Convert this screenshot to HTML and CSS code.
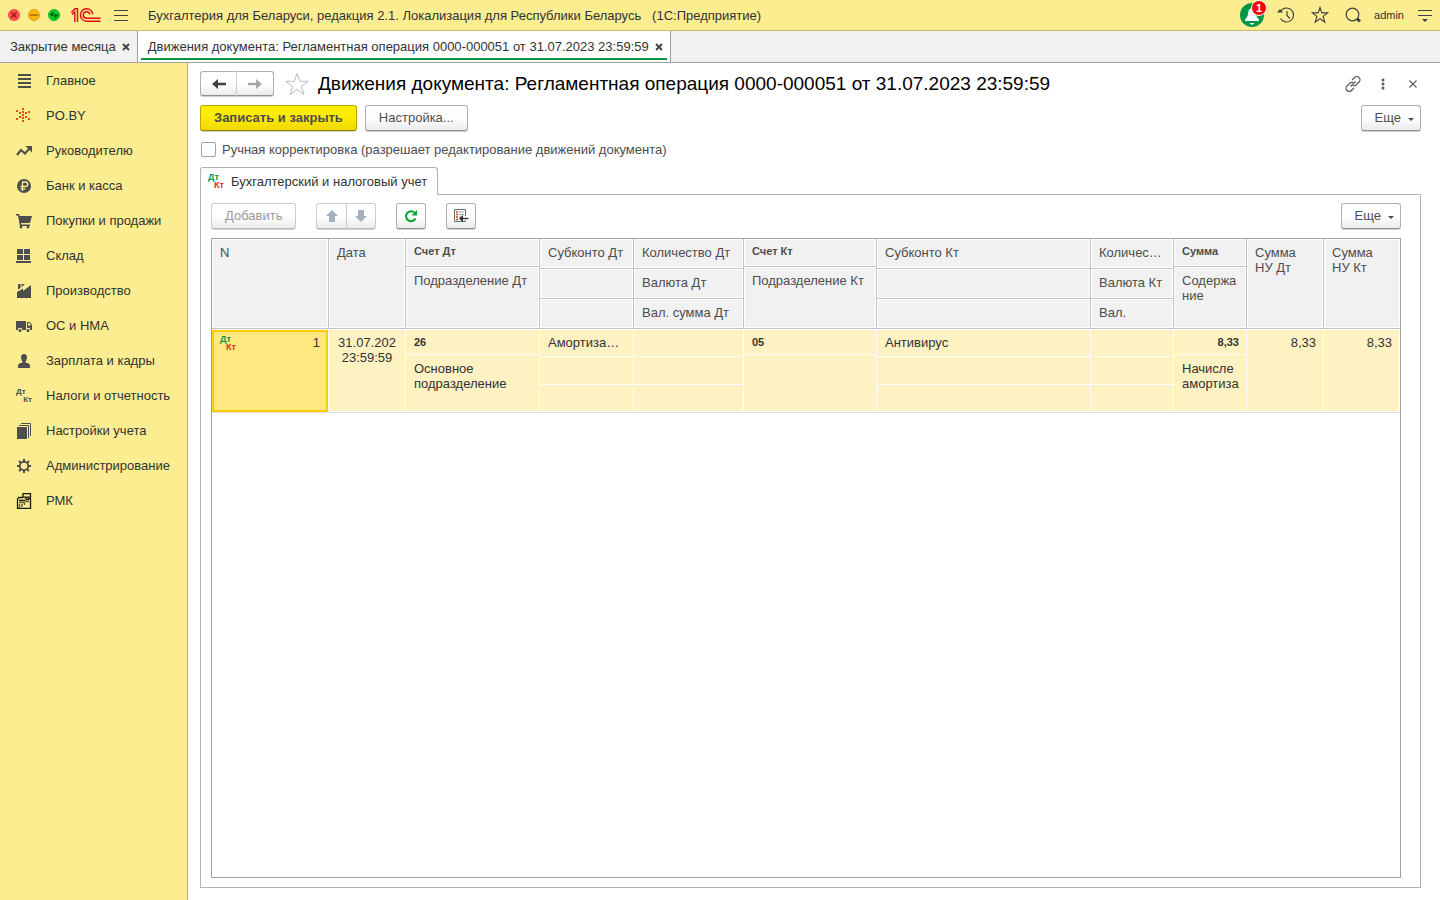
FILE: index.html
```html
<!DOCTYPE html>
<html lang="ru">
<head>
    <meta charset="UTF-8">
    <meta name="viewport" content="width=device-width, initial-scale=1.0">
    <title>Бухгалтерия для Беларуси</title>
    <link rel="stylesheet" href="styles.css">
</head>
<body>
    <header class="topbar">
        <div class="window-buttons">
            <button class="dot" aria-label="Закрыть окно"><svg width="12" height="12"><circle cx="6" cy="6" r="6" fill="#fc4f4b"/><path d="M3.5 3.5l5 5m0-5l-5 5" stroke="#96110f" stroke-width="1.3"/></svg></button>
            <button class="dot" aria-label="Свернуть"><svg width="12" height="12"><circle cx="6" cy="6" r="5.5" fill="#ffb70b" stroke="#e39b0e"/><path d="M2 6h8" stroke="#9a6300" stroke-width="1.4"/></svg></button>
            <button class="dot" aria-label="Развернуть"><svg width="12" height="12"><circle cx="6" cy="6" r="5.5" fill="#0ccc27" stroke="#12b32a"/><path d="M5.500 2v5.500L1.500 6zM6.500 10V4.500L10.500 6z" fill="#045c10"/></svg></button>
        </div>
        <svg class="logo" width="30" height="15" viewBox="0 0 30 15" fill="none" stroke="#e30613" stroke-width="1.400"><path d="M.500 4.500L4 .800H6.500V14M1 6.500L3.800 4V14"/><path d="M21.800 6.500A6.200 6.200 0 1 0 15.500 13.200H29.500"/><path d="M18.800 6.500A3.300 3.300 0 1 0 15.500 10.300H29.500"/></svg>
        <button class="bare" aria-label="Меню"><svg width="16" height="14" stroke="#404040"><path d="M1 2.500h14M1 7.500h14M1 12.500h14"/></svg></button>
        <span class="app-title">Бухгалтерия для Беларуси, редакция 2.1. Локализация для Республики Беларусь &nbsp; (1С:Предприятие)</span>
        <div class="top-tools">
            <button class="bare bell" aria-label="Оповещения">
                <svg width="24" height="24"><circle cx="12" cy="12" r="12" fill="#009646"/><path d="M12 5c-3 .5-3.500 3-4 6-.4 2.500-1.500 4-3 5.500V18h14v-1.500c-1.500-1.500-2.600-3-3-5.500-.5-3-1-5.500-4-6z" fill="#fff"/><path d="M9.500 20h5l-2.500 2z" fill="#fff"/></svg>
                <span class="badge">1</span>
            </button>
            <button class="bare" aria-label="История"><svg width="18" height="16" fill="none" stroke="#404040" stroke-width="1.200"><path d="M3.500 4.500A7 7 0 1 1 3.500 11.500"/><path d="M10 4v4.500l3 3"/><path d="M0 5.500h6L3 2z" fill="#404040" stroke="none"/></svg></button>
            <button class="bare" aria-label="Избранное"><svg width="18" height="18" fill="none" stroke="#404040" stroke-width="1.100"><path d="M9 1.500l1.900 5.400h5.800l-4.600 3.500 1.700 5.700L9 12.700l-4.800 3.400 1.700-5.700L1.300 6.900h5.800z"/></svg></button>
            <button class="bare" aria-label="Поиск"><svg width="16" height="16" fill="none" stroke="#404040"><circle cx="7.500" cy="7.500" r="6.300" stroke-width="1.200"/><path d="M12 11.500l3 3" stroke-width="3"/></svg></button>
            <a href="#" class="user">admin</a>
            <button class="bare" aria-label="Настройки"><svg width="14" height="14"><path d="M0 2.500h14M0 7.500h14" stroke="#404040"/><path d="M4 11h6l-3 3z" fill="#404040"/></svg></button>
        </div>
    </header>

    <nav class="tabs">
        <div class="tab"><a href="#">Закрытие месяца</a><button class="bare" aria-label="Закрыть вкладку"><svg width="8" height="8" stroke="#404040" stroke-width="1.800"><path d="M1 1l6 6m0-6L1 7"/></svg></button></div>
        <div class="tab active"><a href="#">Движения документа: Регламентная операция 0000-000051 от 31.07.2023 23:59:59</a><button class="bare" aria-label="Закрыть вкладку"><svg width="8" height="8" stroke="#404040" stroke-width="1.800"><path d="M1 1l6 6m0-6L1 7"/></svg></button></div>
    </nav>

    <div class="workspace">
        <nav class="sidebar">
            <a href="#"><svg viewBox="0 0 16 16"><path d="M2 1h13v2H2zM2 5h13v2H2zM2 9h13v2H2zM2 13h13v2H2z"/></svg>Главное</a>
            <a href="#"><svg viewBox="0 0 16 16" fill="#e8500a"><path d="M6 0h2v2H6zM6 3h2v2H6zM6 6h2v2H6zM6 9h2v2H6zM6 12h2v2H6zM0 2h2v2H0zM3 4h2v2H3zM3 8h2v2H3zM0 10h2v2H0zM9 4h2v2H9zM12 3h2v2h-2zM9 8h2v2H9zM12 10h2v2h-2z"/></svg>PO.BY</a>
            <a href="#"><svg viewBox="0 0 16 16"><path d="M1 12l4-5 4 3.500 4-4.500" fill="none" stroke="#4d4d4d" stroke-width="2.200"/><path d="M9.500 3H16v6.500z"/></svg>Руководителю</a>
            <a href="#"><svg viewBox="0 0 16 16"><circle cx="8" cy="8" r="7"/><path d="M6.500 13V4h3a2.200 2.200 0 0 1 0 4.500H4.500M4.500 10.800h5" fill="none" stroke="#fbed90" stroke-width="1.300"/></svg>Банк и касса</a>
            <a href="#"><svg viewBox="0 0 16 16"><path d="M0 1h3l.7 2H16l-2 7H5l.3 1.500H14V13H4L2 2.500H0z"/><circle cx="5" cy="14" r="1.400"/><circle cx="12" cy="14" r="1.400"/></svg>Покупки и продажи</a>
            <a href="#"><svg viewBox="0 0 16 16"><path d="M1 1h6v5H1zM8 1h6v5H8zM1 7h6v5H1zM8 7h6v5H8zM0 13h15v2H0z"/></svg>Склад</a>
            <a href="#"><svg viewBox="0 0 16 16"><path d="M1 15V9l6-3.500V8l8-6v13zM2 1h2.500v4L2 6.500zM5.500 1H9L5.500 4z"/></svg>Производство</a>
            <a href="#"><svg viewBox="0 0 16 16"><path d="M0 3h10v9H0zM11 4h3l2 3v5h-5z"/><path d="M12 5h1.500L15 7.500h-3z" fill="#fbed90"/><circle cx="4" cy="12" r="2.300" fill="#fbed90"/><circle cx="12" cy="12" r="2.300" fill="#fbed90"/><circle cx="4" cy="12.500" r="1.500"/><circle cx="12" cy="12.500" r="1.500"/></svg>ОС и НМА</a>
            <a href="#"><svg viewBox="0 0 16 16"><path d="M8 1c2 0 3 1.300 3 3.200C11 6 10 8 9.500 8.500v1C12 10 14 10.500 14 13v2H2v-2c0-2.500 2-3 4.500-3.500v-1C6 8 5 6 5 4.200 5 2.300 6 1 8 1z"/></svg>Зарплата и кадры</a>
            <a href="#"><span class="dtkt mono"><b>Дт</b><b>Кт</b></span>Налоги и отчетность</a>
            <a href="#"><svg viewBox="0 0 16 16"><path d="M1 4h10v12H1z"/><path d="M3 2.500h9.500V15M5 .500h9.500V13" fill="none" stroke="#4d4d4d"/></svg>Настройки учета</a>
            <a href="#"><svg viewBox="0 0 16 16"><circle cx="8" cy="8" r="4.200" fill="none" stroke="#4d4d4d" stroke-width="1.800"/><path d="M8 1v3M8 12v3M1 8h3M12 8h3M3 3l2 2M11 11l2 2M13 3l-2 2M5 11l-2 2" stroke="#4d4d4d" stroke-width="2"/></svg>Администрирование</a>
            <a href="#"><svg viewBox="0 0 16 16" fill="none" stroke="#1a1a0a"><path d="M7 4.500H3l-1.500 1.500v9.500h13V5.500H12" stroke-width="1.300"/><path d="M7 .700h7.500v3.500H7zM10 4v2.500h3M3 7.500h6" stroke-width="1.300"/><path d="M3 9.500h6M3.500 11v4M6 11v3M8.500 10v2M9 8.500h4" stroke="#6d6530" stroke-width="1.500"/></svg>РМК</a>
        </nav>

        <main class="document">
            <div class="title-row">
                <div class="btn-group nav-group">
                    <button class="btn" aria-label="Назад"><svg width="14" height="12"><path d="M0 6l6-5v3.700h8v2.600H6V11z" fill="#404040"/></svg></button>
                    <button class="btn" aria-label="Вперед"><svg width="14" height="12"><path d="M14 6L8 1v3.700H0v2.600h8V11z" fill="#a6a6a6"/></svg></button>
                </div>
                <button class="bare star" aria-label="В избранное"><svg width="24" height="24" fill="none" stroke="#b3bcc7"><path d="M12 1.500l2.700 7.800h8.500l-6.800 5 2.600 8.200-7-5-7 5 2.600-8.200-6.800-5h8.500z"/></svg></button>
                <h1>Движения документа: Регламентная операция 0000-000051 от 31.07.2023 23:59:59</h1>
                <div class="title-tools">
                    <button class="bare" aria-label="Ссылка"><svg width="16" height="16" fill="none" stroke="#595959" stroke-width="1.200"><path d="M7 4l2.500-2.500a3 3 0 0 1 4.500 0 3 3 0 0 1 0 4.500L11 9a3 3 0 0 1-3 .5M9 12l-2.500 2.500a3 3 0 0 1-4.500 0 3 3 0 0 1 0-4.500L5 7a3 3 0 0 1 3-.5M5.500 10.500l5-5"/></svg></button>
                    <button class="bare" aria-label="Еще действия"><svg width="4" height="12" fill="#595959"><circle cx="2" cy="2" r="1.500"/><circle cx="2" cy="6" r="1.500"/><circle cx="2" cy="10" r="1.500"/></svg></button>
                    <button class="bare" aria-label="Закрыть"><svg width="8" height="8" stroke="#595959" stroke-width="1.100"><path d="M.500.500l7 7m0-7l-7 7"/></svg></button>
                </div>
            </div>

            <div class="command-row">
                <button class="btn primary">Записать и закрыть</button>
                <button class="btn">Настройка...</button>
                <button class="btn more">Еще<i class="caret"></i></button>
            </div>

            <div class="check-row">
                <input type="checkbox" id="manual">
                <label for="manual">Ручная корректировка (разрешает редактирование движений документа)</label>
            </div>

            <div class="page-tabs">
                <button class="page-tab"><span class="dtkt"><b>Дт</b><b>Кт</b></span>Бухгалтерский и налоговый учет</button>
            </div>

            <section class="panel">
                <div class="toolbar">
                    <button class="btn muted">Добавить</button>
                    <div class="btn-group muted">
                        <button class="btn" aria-label="Вверх"><svg width="12" height="12"><path d="M6 0l6 6H9v6H3V6H0z" fill="#a5b0bb"/></svg></button>
                        <button class="btn" aria-label="Вниз"><svg width="12" height="12"><path d="M6 12l6-6H9V0H3v6H0z" fill="#a5b0bb"/></svg></button>
                    </div>
                    <button class="btn square" aria-label="Обновить"><svg width="14" height="14"><path d="M11.500 9.500A5 5 0 1 1 10.500 3.500" fill="none" stroke="#00a329" stroke-width="2"/><path d="M13 1v5.500H7.500z" fill="#00a329"/></svg></button>
                    <button class="btn square" aria-label="Показать движения"><svg width="16" height="16" fill="none"><path d="M12.500 8V1.500H1.500v12H12.500V12" stroke="#5c7080"/><path d="M3 4h2M3 6.500h2M3 9h2M3 11.500h2" stroke="#d9431e" stroke-width="1.300"/><path d="M6 4h5M6 6.500h5M6 9h2" stroke="#98a4ae"/><path d="M15.500 10.500H9" stroke="#303030" stroke-width="1.300"/><path d="M10 7v7l-4-3.500z" fill="#303030"/></svg></button>
                    <button class="btn more">Еще<i class="caret"></i></button>
                </div>

                <div class="grid-box">
                    <table class="grid">
                        <colgroup>
                            <col class="c-n"><col class="c-date"><col class="c-acc"><col class="c-sub"><col class="c-qty"><col class="c-acc-kt"><col><col class="c-qty-kt"><col class="c-sum"><col class="c-nu"><col class="c-nu-kt">
                        </colgroup>
                        <thead>
                            <tr>
                                <th><div class="stack"><div>N</div></div></th>
                                <th><div class="stack"><div>Дата</div></div></th>
                                <th><div class="stack two"><div>Счет Дт</div><div>Подразделение Дт</div></div></th>
                                <th><div class="stack three"><div>Субконто Дт</div><div></div><div></div></div></th>
                                <th><div class="stack three"><div>Количество Дт</div><div>Валюта Дт</div><div>Вал. сумма Дт</div></div></th>
                                <th><div class="stack two"><div>Счет Кт</div><div>Подразделение Кт</div></div></th>
                                <th><div class="stack three"><div>Субконто Кт</div><div></div><div></div></div></th>
                                <th><div class="stack three"><div>Количес…</div><div>Валюта Кт</div><div>Вал.</div></div></th>
                                <th><div class="stack two"><div>Сумма</div><div>Содержа<br>ние</div></div></th>
                                <th><div class="stack"><div>Сумма<br>НУ Дт</div></div></th>
                                <th><div class="stack"><div>Сумма<br>НУ Кт</div></div></th>
                            </tr>
                        </thead>
                        <tbody>
                            <tr>
                                <td class="selected"><div class="stack"><div class="num-cell"><span class="dtkt"><b>Дт</b><b>Кт</b></span><span>1</span></div></div></td>
                                <td><div class="stack"><div class="date">31.07.202<br>23:59:59</div></div></td>
                                <td><div class="stack two"><div>26</div><div>Основное<br>подразделение</div></div></td>
                                <td><div class="stack three"><div>Амортиза…</div><div></div><div></div></div></td>
                                <td><div class="stack three"><div></div><div></div><div></div></div></td>
                                <td><div class="stack two"><div>05</div><div></div></div></td>
                                <td><div class="stack three"><div>Антивирус</div><div></div><div></div></div></td>
                                <td><div class="stack three"><div></div><div></div><div></div></div></td>
                                <td><div class="stack two"><div class="right">8,33</div><div>Начисле<br>амортиза</div></div></td>
                                <td><div class="stack"><div class="right">8,33</div></div></td>
                                <td><div class="stack"><div class="right">8,33</div></div></td>
                            </tr>
                        </tbody>
                    </table>
                </div>
            </section>
        </main>
    </div>
</body>
</html>
```
FILE: styles.css
```css
* {
    box-sizing: border-box;
}
body {
    margin: 0;
    min-height: 100vh;
    display: flex;
    flex-direction: column;
    font-family: "Liberation Sans", Arial, sans-serif;
    font-size: 13px;
    line-height: 15px;
    color: #333;
    background: #fff;
}
button {
    font: inherit;
    color: inherit;
}
a {
    color: inherit;
    text-decoration: none;
}
svg {
    display: block;
    flex: none;
}
.bare {
    padding: 0;
    border: none;
    background: none;
    cursor: pointer;
}

/* top bar */
.topbar {
    display: flex;
    align-items: center;
    height: 31px;
    padding: 0 8px;
    background: #fbed90;
    border-bottom: 1px solid #c8bd72;
}
.window-buttons {
    display: flex;
    gap: 8px;
}
.dot {
    padding: 0;
    border: none;
    background: none;
}
.logo {
    margin: 0 12px 0 11px;
}
.app-title {
    margin-left: 19px;
}
.top-tools {
    display: flex;
    align-items: center;
    margin-left: auto;
}
.top-tools .bare {
    margin-right: 16px;
}
.top-tools .bare:first-child {
    margin-right: 13px;
}
.top-tools .bare:last-child {
    margin: 0;
}
.bell {
    position: relative;
}
.badge {
    position: absolute;
    top: -3px;
    right: -3px;
    width: 16px;
    height: 16px;
    border: 1px solid #fff;
    border-radius: 50%;
    background: #f00;
    color: #fff;
    font-size: 11px;
    font-weight: bold;
    line-height: 14px;
}
.user {
    margin: 0 14px 0 -3px;
    font-size: 11px;
}

/* open windows */
.tabs {
    display: flex;
    height: 32px;
    background: #f1f1f1;
    border-bottom: 1px solid #a0a0a0;
}
.tab {
    display: flex;
    align-items: center;
    gap: 6px;
    padding: 0 7px 0 10px;
    border-right: 1px solid #a0a0a0;
}
.tab.active {
    position: relative;
    background: #fff;
}
.tab.active::after {
    content: "";
    position: absolute;
    left: 3px;
    right: 3px;
    bottom: 2px;
    height: 2px;
    background: #009646;
}

.workspace {
    display: flex;
    flex: 1;
}
.sidebar {
    flex: none;
    width: 188px;
    background: #fbed90;
    border-right: 1px solid #b5ad80;
}
.sidebar a {
    display: flex;
    align-items: center;
    gap: 14px;
    height: 35px;
    padding-left: 16px;
}
.sidebar svg {
    width: 16px;
    height: 16px;
}
.sidebar svg:not([fill]) {
    fill: #4d4d4d;
}

/* debit / credit mark */
.dtkt {
    display: flex;
    flex-direction: column;
    flex: none;
    width: 16px;
    font-size: 9px;
    line-height: 8px;
    text-align: left;
    color: #009646;
}
.dtkt b:last-child {
    align-self: flex-end;
    color: #e8262b;
}
.dtkt.mono {
    font-size: 8px;
}
.dtkt.mono,
.dtkt.mono b:last-child {
    color: #4d4d4d;
}

.document {
    flex: 1;
    min-width: 0;
    display: flex;
    flex-direction: column;
    padding: 8px 19px 12px 12px;
    color: #4d4d4d;
}
.title-row {
    display: flex;
    align-items: center;
    height: 25px;
}
h1 {
    margin: 0;
    font-size: 19px;
    line-height: 24px;
    font-weight: normal;
    color: #000;
}
.star {
    margin: 0 9px 0 11px;
}
.title-tools {
    display: flex;
    gap: 14px;
    margin-left: auto;
}
.title-tools .bare {
    display: flex;
    align-items: center;
    justify-content: center;
    width: 16px;
    height: 18px;
}
.btn {
    display: flex;
    align-items: center;
    justify-content: center;
    height: 26px;
    padding: 0 13px 1px;
    border: 1px solid #b0b0b0;
    border-bottom-color: #909090;
    border-radius: 3px;
    background: linear-gradient(#fff 50%, #ebebeb);
    box-shadow: 0 1px 0 #d0d0d0;
    cursor: pointer;
}
.btn-group {
    display: flex;
}
.btn-group .btn {
    width: 30px;
    padding: 0;
}
.btn-group .btn:first-child {
    width: 31px;
    border-radius: 3px 0 0 3px;
}
.btn-group .btn:last-child {
    width: 29px;
    border-left: none;
    border-radius: 0 3px 3px 0;
}
.btn-group.nav-group .btn {
    width: 37px;
    height: 25px;
}
.nav-group .btn:first-child {
    border-right-color: #d0d0d0;
}
.command-row {
    display: flex;
    gap: 8px;
    margin-top: 9px;
}
.primary {
    border-color: #b8a800;
    border-bottom-color: #908400;
    background: linear-gradient(#ffed00 40%, #f0d800);
    font-weight: bold;
}
.btn.more {
    gap: 7px;
    margin-left: auto;
    padding-right: 6px;
}
.caret {
    margin-top: 4px;
    border: 3px solid transparent;
    border-top-color: #4d4d4d;
    border-bottom: none;
}
.check-row {
    display: flex;
    align-items: center;
    gap: 6px;
    margin: 11px 0 10px 1px;
}
.check-row input {
    appearance: none;
    width: 15px;
    height: 15px;
    margin: 0;
    border: 1px solid #a0a0a0;
    border-radius: 2px;
    background: #fff;
}

/* page with movements */
.page-tabs {
    display: flex;
}
.page-tab {
    display: flex;
    align-items: center;
    gap: 7px;
    height: 28px;
    margin-bottom: -1px;
    padding: 0 10px 1px 7px;
    position: relative;
    border: 1px solid #b3b3b3;
    border-bottom: none;
    border-radius: 3px 3px 0 0;
    background: #fff;
    color: #333;
}
.panel {
    flex: 1;
    display: flex;
    flex-direction: column;
    padding: 8px 19px 9px 10px;
    border: 1px solid #b3b3b3;
}
.toolbar {
    display: flex;
    gap: 20px;
    margin-bottom: 9px;
}
.toolbar .muted,
.muted .btn {
    border-color: #ccc;
    border-bottom-color: #bbb;
    color: #999;
}
.toolbar div.muted {
    border: none;
}
.btn.square {
    width: 30px;
    padding: 0;
}
.grid-box {
    flex: 1;
    border: 1px solid #a0a0a0;
}
.grid {
    width: 100%;
    table-layout: fixed;
    border-collapse: collapse;
}
.c-n { width: 117px; }
.c-date { width: 77px; }
.c-acc { width: 134px; }
.c-sub { width: 94px; }
.c-qty { width: 110px; }
.c-acc-kt { width: 133px; }
.c-qty-kt { width: 83px; }
.c-sum { width: 73px; }
.c-nu { width: 77px; }
.c-nu-kt { width: 76px; }
.grid th,
.grid td {
    padding: 0;
    font-weight: normal;
    text-align: left;
    vertical-align: top;
}
.stack {
    display: grid;
    grid-template-rows: 1fr;
}
.stack > div {
    overflow: hidden;
    min-width: 0;
    padding: 6px 7px 0 8px;
}
.stack.two > div:first-child {
    padding-top: 5px;
    font-size: 11px;
    font-weight: bold;
}
.stack.three > div {
    white-space: nowrap;
    text-overflow: ellipsis;
}
thead .stack {
    height: 90px;
}
thead .stack.two {
    grid-template-rows: 28px 1fr;
}
thead .stack.three {
    grid-template-rows: 30px 30px 30px;
}
thead .stack > div {
    border-right: 1px solid #c4c4c4;
    border-bottom: 1px solid #c4c4c4;
    background: #f1f1f1;
    box-shadow: inset 0 0 0 1px #fff;
}
thead th:last-child .stack > div {
    border-right: none;
}
tbody {
    color: #333;
}
tbody tr {
    border-bottom: 1px solid #ddd;
}
tbody .stack {
    height: 83px;
    padding-top: 1px;
}
tbody .stack.two {
    grid-template-rows: 25px 1fr;
}
tbody .stack.three {
    grid-template-rows: 27px 28px 1fr;
}
tbody .stack > div {
    border-right: 1px solid #fff;
    border-bottom: 1px solid #fff;
    background: #fff2c2;
}
tbody .stack > div:first-child {
    padding-top: 5px;
}
tbody .selected .stack > div:first-child {
    margin-right: 1px;
    padding: 3px 6px 0;
    border: 2px solid #fccb00;
    background: #ffe880;
}
.num-cell {
    display: flex;
    justify-content: space-between;
}
.stack > .date {
    padding-left: 7px;
    text-align: center;
}
.stack > .right {
    text-align: right;
}
```
